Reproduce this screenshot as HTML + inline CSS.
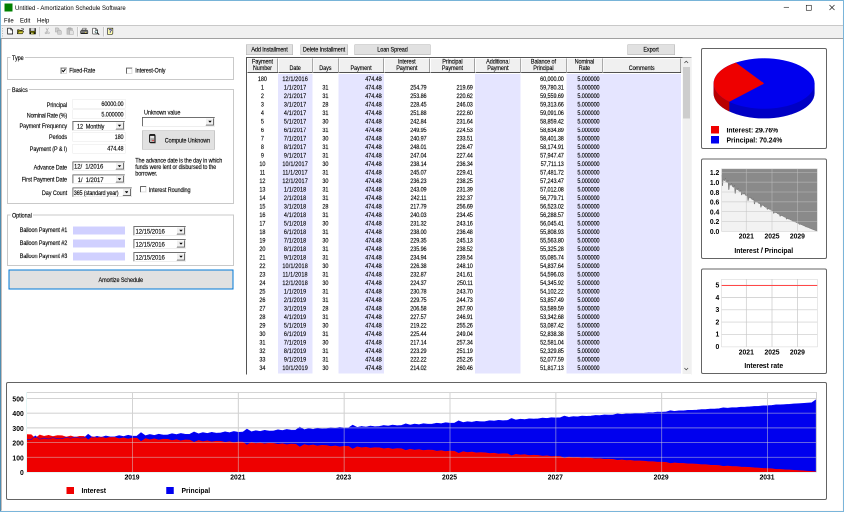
<!DOCTYPE html><html><head><meta charset="utf-8"><title>Untitled - Amortization Schedule Software</title><style>
html,body{margin:0;padding:0;background:#fff;overflow:hidden}
body{width:844px;height:512px;position:relative}
#w{position:absolute;left:0;top:0;width:1688px;height:1024px;transform:scale(.5);transform-origin:0 0;background:#fff;font-family:"Liberation Sans",sans-serif;font-size:11px;color:#000;letter-spacing:-.2px;overflow:hidden;will-change:transform}
#w div{position:absolute;box-sizing:border-box}
#w svg{position:absolute;overflow:visible}
.t{white-space:pre;line-height:14px;height:14px;margin-top:-7px;transform:scaleY(1.14);-webkit-text-stroke:.22px #000}
.r{text-align:right}.c{text-align:center}
.b{font-weight:bold;letter-spacing:0}
.gb{border:2px solid #c9c9c9}
.gl{background:#fff;padding:0 3px;white-space:pre;line-height:14px;height:14px;margin-top:-6px;transform:scaleY(1.14);-webkit-text-stroke:.22px #000}
.ed{border:1px solid #e6e6e6;background:#fff}
.cb{border:1.5px solid;border-color:#505050 #dcdcdc #dcdcdc #505050;background:#fff;box-shadow:inset 1px 1px 0 #909090}
.dd{background:#f0f0f0;border:1px solid;border-color:#fff #505050 #505050 #fff;box-shadow:inset -1px -1px 0 #909090}
.btn{background:#e1e1e1;border:1px solid #adadad}
.hd{background:#f0f0f0;border:solid;border-width:2px 1.7px 2px 2px;border-color:#fff #525252 #525252 #fff}
.pn{border:2px solid #646464;border-radius:4px;background:#fff}
.ck{border:1px solid;border-color:#808080 #e4e4e4 #e4e4e4 #808080;background:#fff;box-shadow:inset 1px 1px 0 #505050,inset -1px -1px 0 #d8d8d8}
</style></head><body><div id="w">
<div style="left:0px;top:0px;width:1688px;height:2px;background:#78b4d8"></div>
<div style="left:0px;top:0px;width:2px;height:78px;background:#78b4d8"></div>
<div style="left:0px;top:77px;width:2.4px;height:947px;background:#4f8db0"></div>
<div style="left:2.4px;top:77px;width:1.5px;height:945px;background:#c6bdbb"></div>
<div style="left:1686px;top:0px;width:2px;height:1024px;background:#7ab5da"></div>
<div style="left:1684.5px;top:31px;width:1.5px;height:990px;background:#fdf5f0"></div>
<div style="left:0px;top:1022px;width:1688px;height:2px;background:#7ab5da"></div>
<div style="left:2px;top:1020.5px;width:1684px;height:1.5px;background:#fdf5f0"></div>
<div style="left:9px;top:7px;width:16px;height:16px;background:#008000"></div>
<div class="t" style="left:30px;top:15.5px;font-size:12px;letter-spacing:0;transform:scaleY(1.04);-webkit-text-stroke:0">Untitled - Amortization Schedule Software</div>
<svg style="left:1560px;top:0" width="128" height="31" viewBox="0 0 128 31"><g stroke="#000" stroke-width="1.1" fill="none"><path d="M7.5 14.5h10.5"/><rect x="52.5" y="10.5" width="10" height="10"/><path d="M99 10l10 10M109 10l-10 10"/></g></svg>
<div class="t" style="left:8px;top:41px;font-size:12px;letter-spacing:0;transform:scaleY(1.04);-webkit-text-stroke:0">File</div>
<div class="t" style="left:40px;top:41px;font-size:12px;letter-spacing:0;transform:scaleY(1.04);-webkit-text-stroke:0">Edit</div>
<div class="t" style="left:74px;top:41px;font-size:12px;letter-spacing:0;transform:scaleY(1.04);-webkit-text-stroke:0">Help</div>
<div style="left:2px;top:50px;width:1684px;height:27.5px;background:#f0f0f0;border-top:1.5px solid #a0a0a0;border-bottom:2px solid #a0a0a0"></div>
<div style="left:4px;top:56px;width:2px;height:2px;background:#b8b8b8"></div>
<div style="left:4px;top:61px;width:2px;height:2px;background:#b8b8b8"></div>
<div style="left:4px;top:66px;width:2px;height:2px;background:#b8b8b8"></div>
<div style="left:4px;top:71px;width:2px;height:2px;background:#b8b8b8"></div>
<svg style="left:14px;top:55px" width="14.4" height="14.4" viewBox="0 0 16 16"><path d="M1.5 1.5h7l4 4v9h-11z" fill="#fff" stroke="#000" stroke-width="1.500"/><path d="M8.5 1.5v4h4" fill="none" stroke="#000" stroke-width="1.200"/></svg>
<svg style="left:34px;top:55px" width="15.3" height="14.4" viewBox="0 0 17 16"><path d="M1 5h4l1 1h6v8h-11z" fill="#808000" stroke="#000" stroke-width="1.100"/><path d="M1 14l3-6h11l-3 6z" fill="#d8d040" stroke="#000" stroke-width="1.100"/><path d="M9 3q3-2.5 5 0l.5 1.5m0-2.500v2.500h-2.500" fill="none" stroke="#000" stroke-width="1"/></svg>
<svg style="left:58px;top:55px" width="14.4" height="14.4" viewBox="0 0 16 16"><rect x="1" y="1.500" width="14" height="13.500" fill="#000"/><rect x="3.500" y="1.500" width="9" height="6" fill="#d8d8d8"/><rect x="2" y="8.500" width="12" height="2" fill="#808000"/><rect x="4.500" y="11" width="7" height="4" fill="#808000"/><rect x="5.500" y="11.500" width="2" height="3" fill="#fff"/></svg>
<div style="left:78px;top:54px;width:1px;height:19px;background:#a0a0a0"></div>
<div style="left:79px;top:54px;width:1px;height:19px;background:#fff"></div>
<svg style="left:89px;top:55px" width="10.8" height="14.4" viewBox="0 0 12 16"><g fill="none" stroke="#a8a8a8" stroke-width="1.300"><path d="M3 1l5 9M9 1l-5 9"/><circle cx="3.200" cy="12" r="2"/><circle cx="8.800" cy="12" r="2"/></g></svg>
<svg style="left:110px;top:55px" width="14.4" height="14.4" viewBox="0 0 16 16"><g fill="#d0d0d0" stroke="#a8a8a8" stroke-width="1.200"><path d="M1 1h6l2 2v7h-8z"/><path d="M6 6h6l2 2v7h-8z"/></g></svg>
<svg style="left:133px;top:55px" width="14.4" height="14.4" viewBox="0 0 16 16"><g stroke="#a8a8a8" stroke-width="1.200"><rect x="1" y="2" width="12" height="13" fill="#c4c4c4"/><rect x="4" y=".6" width="6" height="3" fill="#b0b0b0"/><path d="M7 6h6l2 2v7.500h-8z" fill="#e4e4e4"/></g></svg>
<div style="left:154.5px;top:54px;width:1px;height:19px;background:#a0a0a0"></div>
<div style="left:155.5px;top:54px;width:1px;height:19px;background:#fff"></div>
<svg style="left:160px;top:55px" width="16.2" height="14.4" viewBox="0 0 18 16"><path d="M4 6l2-4.500h8l-2 4.500z" fill="#fff" stroke="#000" stroke-width=".9"/><path d="M1 8l3-2.500h12l1.500 2.500v5h-16.500z" fill="#606060" stroke="#000" stroke-width=".9"/><path d="M1 10h16" stroke="#c0c0c0" stroke-width="1"/><rect x="11" y="10.500" width="3" height="2" fill="#e0d040"/><path d="M2 13.500h15" stroke="#000" stroke-width="1.500"/></svg>
<svg style="left:184px;top:55px" width="15.3" height="14.4" viewBox="0 0 17 16"><path d="M1.500 1.500h7l4 4v9h-11z" fill="#fff" stroke="#000" stroke-width="1.100"/><path d="M8.500 1.500v4h4" fill="none" stroke="#000"/><circle cx="9.500" cy="9.500" r="3" fill="#dff" stroke="#000" stroke-width="1.100"/><path d="M12 12l4 4" stroke="#000" stroke-width="1.800"/></svg>
<div style="left:206.5px;top:54px;width:1px;height:19px;background:#a0a0a0"></div>
<div style="left:207.5px;top:54px;width:1px;height:19px;background:#fff"></div>
<svg style="left:214px;top:55px" width="13.5" height="14.4" viewBox="0 0 15 16"><path d="M1.500 1.500h11.500v12l-2 2h-9.500z" fill="#ffffb0" stroke="#000" stroke-width="1.200"/><text x="7.200" y="12.500" font-size="13" font-weight="bold" text-anchor="middle" fill="#000090" font-family="Liberation Sans,sans-serif" letter-spacing="0">?</text></svg>
<div class="gb" style="left:14px;top:114px;width:454px;height:46px;"></div>
<div class="gl" style="left:21px;top:114px">Type</div>
<div class="gb" style="left:14px;top:178px;width:454px;height:230px;"></div>
<div class="gl" style="left:21px;top:178px">Basics</div>
<div class="gb" style="left:14px;top:429px;width:454px;height:102.5px;"></div>
<div class="gl" style="left:21px;top:429px">Optional</div>
<div class="ck" style="left:120.5px;top:135px;width:13px;height:13px;"></div>
<svg style="left:120.5px;top:135px" width="13" height="13" viewBox="0 0 13 13"><path d="M3.200 5.800l2.300 2.600l4.300-5" fill="none" stroke="#000" stroke-width="2.200"/></svg>
<div class="t" style="left:138.5px;top:140.3px;">Fixed-Rate</div>
<div class="ck" style="left:252px;top:135px;width:13px;height:13px;"></div>
<div class="t" style="left:270.5px;top:140.3px;">Interest-Only</div>
<div class="t r" style="left:-266px;width:400px;top:208.5px;">Principal</div>
<div class="ed" style="left:145px;top:197.8px;width:105.5px;height:19px;"></div>
<div class="t r" style="left:-153px;width:400px;top:206.5px;">60000.00</div>
<div class="t r" style="left:-266px;width:400px;top:229.8px;"><span style="letter-spacing:-.4px">Nominal Rate (%)</span></div>
<div class="ed" style="left:145px;top:219.1px;width:105.5px;height:19px;"></div>
<div class="t r" style="left:-153px;width:400px;top:227.8px;">5.000000</div>
<div class="t r" style="left:-266px;width:400px;top:251.2px;">Payment Frequency</div>
<div class="t r" style="left:-266px;width:400px;top:273.4px;">Periods</div>
<div class="ed" style="left:145px;top:263.9px;width:105.5px;height:19px;"></div>
<div class="t r" style="left:-153px;width:400px;top:272.6px;">180</div>
<div class="t r" style="left:-266px;width:400px;top:297.2px;">Payment (P &amp; I)</div>
<div class="ed" style="left:145px;top:287.7px;width:105.5px;height:19px;"></div>
<div class="t r" style="left:-153px;width:400px;top:296.4px;">474.48</div>
<div class="cb" style="left:145px;top:242px;width:104.5px;height:18.5px;"></div>
<div class="dd" style="left:230.5px;top:244px;width:17px;height:14.5px;"></div>
<svg style="left:235px;top:249.25px" width="8" height="5" viewBox="0 0 8 5"><path d="M.5 .5h7l-3.500 4z" fill="#000"/></svg>
<div class="t" style="left:154px;top:251.75px;">12  Monthly</div>
<div class="cb" style="left:145px;top:322.5px;width:104.5px;height:18px;"></div>
<div class="dd" style="left:230.5px;top:324.5px;width:17px;height:14px;"></div>
<svg style="left:235px;top:329.5px" width="8" height="5" viewBox="0 0 8 5"><path d="M.5 .5h7l-3.500 4z" fill="#000"/></svg>
<div class="t" style="left:148px;top:332px;font-size:12px;letter-spacing:-.15px">12/  1/2016</div>
<div class="t r" style="left:-266px;width:400px;top:333.6px;">Advance Date</div>
<div class="cb" style="left:145px;top:349px;width:104.5px;height:18px;"></div>
<div class="dd" style="left:230.5px;top:351px;width:17px;height:14px;"></div>
<svg style="left:235px;top:356px" width="8" height="5" viewBox="0 0 8 5"><path d="M.5 .5h7l-3.500 4z" fill="#000"/></svg>
<div class="t" style="left:152px;top:358.5px;font-size:12px;letter-spacing:-.15px"> 1/  1/2017</div>
<div class="t r" style="left:-266px;width:400px;top:358px;">First Payment Date</div>
<div class="cb" style="left:145px;top:374.5px;width:118.5px;height:19px;"></div>
<div class="dd" style="left:244.5px;top:376.5px;width:17px;height:15px;"></div>
<svg style="left:249px;top:382px" width="8" height="5" viewBox="0 0 8 5"><path d="M.5 .5h7l-3.500 4z" fill="#000"/></svg>
<div class="t" style="left:147.5px;top:384.5px;letter-spacing:-.35px">365 (standard year)</div>
<div class="t r" style="left:-266px;width:400px;top:384.6px;">Day Count</div>
<div class="t" style="left:288px;top:224px;">Unknown value</div>
<div class="cb" style="left:284px;top:234px;width:146px;height:18.5px;"></div>
<div class="dd" style="left:411px;top:236px;width:17px;height:14.5px;"></div>
<svg style="left:415.5px;top:241.25px" width="8" height="5" viewBox="0 0 8 5"><path d="M.5 .5h7l-3.500 4z" fill="#000"/></svg>
<div class="btn" style="left:284px;top:261px;width:146px;height:38px;"></div>
<svg style="left:297.5px;top:267.5px" width="14" height="19" viewBox="0 0 14 19"><rect x="1.2" y="1.2" width="10.600" height="15.600" rx="1" fill="#c8c8c8" stroke="#000" stroke-width="1.700"/><path d="M12.600 3v15h-10" fill="none" stroke="#222" stroke-width="1.200"/><rect x="2" y="1.500" width="9" height="2.200" fill="#111"/><rect x="3" y="4.600" width="7" height="2.600" fill="#f4f4f4"/><rect x="3" y="8.500" width="7" height="6.500" fill="#a8a8a8"/><rect x="6.800" y="11.800" width="2.600" height="2.600" fill="#f02020"/></svg>
<div class="t" style="left:329.5px;top:280px;">Compute Unknown</div>
<div class="t" style="left:270.5px;top:320.3px;">The advance date is the day in which</div>
<div class="t" style="left:270.5px;top:333.1px;">funds were lent or disbursed to the</div>
<div class="t" style="left:270.5px;top:345.8px;">borrower.</div>
<div class="ck" style="left:279.5px;top:372px;width:13px;height:13px;"></div>
<div class="t" style="left:297.5px;top:379px;">Interest Rounding</div>
<div class="t" style="left:39.5px;top:459.4px;">Balloon Payment #1</div>
<div style="left:145.5px;top:452.9px;width:104px;height:16px;background:#d0d0ff"></div>
<div class="cb" style="left:266.5px;top:451.9px;width:105.5px;height:19px;"></div>
<div class="dd" style="left:353px;top:453.9px;width:17px;height:15px;"></div>
<svg style="left:357.5px;top:459.4px" width="8" height="5" viewBox="0 0 8 5"><path d="M.5 .5h7l-3.500 4z" fill="#000"/></svg>
<div class="t" style="left:271px;top:461.9px;font-size:12px;letter-spacing:-.15px">12/15/2016</div>
<div class="t" style="left:39.5px;top:485.4px;">Balloon Payment #2</div>
<div style="left:145.5px;top:478.9px;width:104px;height:16px;background:#d0d0ff"></div>
<div class="cb" style="left:266.5px;top:477.9px;width:105.5px;height:19px;"></div>
<div class="dd" style="left:353px;top:479.9px;width:17px;height:15px;"></div>
<svg style="left:357.5px;top:485.4px" width="8" height="5" viewBox="0 0 8 5"><path d="M.5 .5h7l-3.500 4z" fill="#000"/></svg>
<div class="t" style="left:271px;top:487.9px;font-size:12px;letter-spacing:-.15px">12/15/2016</div>
<div class="t" style="left:39.5px;top:511.4px;">Balloon Payment #3</div>
<div style="left:145.5px;top:504.9px;width:104px;height:16px;background:#d0d0ff"></div>
<div class="cb" style="left:266.5px;top:503.9px;width:105.5px;height:19px;"></div>
<div class="dd" style="left:353px;top:505.9px;width:17px;height:15px;"></div>
<svg style="left:357.5px;top:511.4px" width="8" height="5" viewBox="0 0 8 5"><path d="M.5 .5h7l-3.500 4z" fill="#000"/></svg>
<div class="t" style="left:271px;top:513.9px;font-size:12px;letter-spacing:-.15px">12/15/2016</div>
<div style="left:16.5px;top:539px;width:450.5px;height:40px;background:#e1e1e1;border:2px solid #0078d7"></div>
<div class="t c" style="left:41.5px;width:400px;top:559.4px;">Amortize Schedule</div>
<div class="btn" style="left:492px;top:89px;width:94px;height:20.5px;"></div>
<div class="t c" style="left:339px;width:400px;top:98.4px;">Add Installment</div>
<div class="btn" style="left:600.5px;top:89px;width:95px;height:20.5px;"></div>
<div class="t c" style="left:448px;width:400px;top:98.4px;">Delete Installment</div>
<div class="btn" style="left:708.5px;top:89px;width:152.5px;height:20.5px;"></div>
<div class="t c" style="left:585px;width:400px;top:98.4px;">Loan Spread</div>
<div class="btn" style="left:1254.5px;top:89px;width:95.5px;height:20.5px;"></div>
<div class="t c" style="left:1102px;width:400px;top:98.4px;">Export</div>
<div style="left:492px;top:114px;width:890.5px;height:634.5px;background:#fff;border-left:2px solid #545454;border-top:2px solid #545454;border-right:1px solid #e8e8e8"></div>
<div style="left:555.5px;top:148.4px;width:69.5px;height:598.6px;background:#e5e5ff"></div>
<div style="left:676.5px;top:148.4px;width:91px;height:598.6px;background:#e5e5ff"></div>
<div style="left:950px;top:148.4px;width:91px;height:598.6px;background:#e5e5ff"></div>
<div style="left:1132.5px;top:148.4px;width:72.5px;height:598.6px;background:#e5e5ff"></div>
<div style="left:1205px;top:148.4px;width:156.5px;height:598.6px;background:#e5e5ff"></div>
<div class="hd" style="left:494px;top:116px;width:61.5px;height:30px;"></div>
<div class="t c" style="left:324.75px;width:400px;top:122px;">Payment</div>
<div class="t c" style="left:324.75px;width:400px;top:134.8px;">Number</div>
<div class="hd" style="left:555.5px;top:116px;width:69.5px;height:30px;"></div>
<div class="t c" style="left:390.25px;width:400px;top:134.8px;">Date</div>
<div class="hd" style="left:625px;top:116px;width:51.5px;height:30px;"></div>
<div class="t c" style="left:450.75px;width:400px;top:134.8px;">Days</div>
<div class="hd" style="left:676.5px;top:116px;width:91px;height:30px;"></div>
<div class="t c" style="left:522px;width:400px;top:134.8px;">Payment</div>
<div class="hd" style="left:767.5px;top:116px;width:92px;height:30px;"></div>
<div class="t c" style="left:613.5px;width:400px;top:122px;">Interest</div>
<div class="t c" style="left:613.5px;width:400px;top:134.8px;">Payment</div>
<div class="hd" style="left:859.5px;top:116px;width:90.5px;height:30px;"></div>
<div class="t c" style="left:704.75px;width:400px;top:122px;">Principal</div>
<div class="t c" style="left:704.75px;width:400px;top:134.8px;">Payment</div>
<div class="hd" style="left:950px;top:116px;width:91px;height:30px;"></div>
<div class="t c" style="left:795.5px;width:400px;top:122px;">Additional</div>
<div class="t c" style="left:795.5px;width:400px;top:134.8px;">Payment</div>
<div class="hd" style="left:1041px;top:116px;width:91.5px;height:30px;"></div>
<div class="t c" style="left:886.75px;width:400px;top:122px;">Balance of</div>
<div class="t c" style="left:886.75px;width:400px;top:134.8px;">Principal</div>
<div class="hd" style="left:1132.5px;top:116px;width:72.5px;height:30px;"></div>
<div class="t c" style="left:968.75px;width:400px;top:122px;">Nominal</div>
<div class="t c" style="left:968.75px;width:400px;top:134.8px;">Rate</div>
<div class="hd" style="left:1205px;top:116px;width:156.5px;height:30px;"></div>
<div class="t c" style="left:1083.25px;width:400px;top:134.8px;">Comments</div>
<div style="left:1361.5px;top:116px;width:3.5px;height:30px;background:#f0f0f0"></div>
<div class="t c" style="left:324.75px;width:400px;top:156.51px;">180</div>
<div class="t c" style="left:390.25px;width:400px;top:156.51px;letter-spacing:.25px">12/1/2016</div>
<div class="t r" style="left:363px;width:400px;top:156.51px;">474.48</div>
<div class="t r" style="left:727.5px;width:400px;top:156.51px;">60,000.00</div>
<div class="t r" style="left:799px;width:400px;top:156.51px;">5.000000</div>
<div class="t c" style="left:324.75px;width:400px;top:173.53px;">1</div>
<div class="t c" style="left:390.25px;width:400px;top:173.53px;letter-spacing:.25px">1/1/2017</div>
<div class="t c" style="left:450.75px;width:400px;top:173.53px;">31</div>
<div class="t r" style="left:363px;width:400px;top:173.53px;">474.48</div>
<div class="t r" style="left:453px;width:400px;top:173.53px;">254.79</div>
<div class="t r" style="left:545.5px;width:400px;top:173.53px;">219.69</div>
<div class="t r" style="left:727.5px;width:400px;top:173.53px;">59,780.31</div>
<div class="t r" style="left:799px;width:400px;top:173.53px;">5.000000</div>
<div class="t c" style="left:324.75px;width:400px;top:190.55px;">2</div>
<div class="t c" style="left:390.25px;width:400px;top:190.55px;letter-spacing:.25px">2/1/2017</div>
<div class="t c" style="left:450.75px;width:400px;top:190.55px;">31</div>
<div class="t r" style="left:363px;width:400px;top:190.55px;">474.48</div>
<div class="t r" style="left:453px;width:400px;top:190.55px;">253.86</div>
<div class="t r" style="left:545.5px;width:400px;top:190.55px;">220.62</div>
<div class="t r" style="left:727.5px;width:400px;top:190.55px;">59,559.69</div>
<div class="t r" style="left:799px;width:400px;top:190.55px;">5.000000</div>
<div class="t c" style="left:324.75px;width:400px;top:207.57px;">3</div>
<div class="t c" style="left:390.25px;width:400px;top:207.57px;letter-spacing:.25px">3/1/2017</div>
<div class="t c" style="left:450.75px;width:400px;top:207.57px;">28</div>
<div class="t r" style="left:363px;width:400px;top:207.57px;">474.48</div>
<div class="t r" style="left:453px;width:400px;top:207.57px;">228.45</div>
<div class="t r" style="left:545.5px;width:400px;top:207.57px;">246.03</div>
<div class="t r" style="left:727.5px;width:400px;top:207.57px;">59,313.66</div>
<div class="t r" style="left:799px;width:400px;top:207.57px;">5.000000</div>
<div class="t c" style="left:324.75px;width:400px;top:224.59px;">4</div>
<div class="t c" style="left:390.25px;width:400px;top:224.59px;letter-spacing:.25px">4/1/2017</div>
<div class="t c" style="left:450.75px;width:400px;top:224.59px;">31</div>
<div class="t r" style="left:363px;width:400px;top:224.59px;">474.48</div>
<div class="t r" style="left:453px;width:400px;top:224.59px;">251.88</div>
<div class="t r" style="left:545.5px;width:400px;top:224.59px;">222.60</div>
<div class="t r" style="left:727.5px;width:400px;top:224.59px;">59,091.06</div>
<div class="t r" style="left:799px;width:400px;top:224.59px;">5.000000</div>
<div class="t c" style="left:324.75px;width:400px;top:241.61px;">5</div>
<div class="t c" style="left:390.25px;width:400px;top:241.61px;letter-spacing:.25px">5/1/2017</div>
<div class="t c" style="left:450.75px;width:400px;top:241.61px;">30</div>
<div class="t r" style="left:363px;width:400px;top:241.61px;">474.48</div>
<div class="t r" style="left:453px;width:400px;top:241.61px;">242.84</div>
<div class="t r" style="left:545.5px;width:400px;top:241.61px;">231.64</div>
<div class="t r" style="left:727.5px;width:400px;top:241.61px;">58,859.42</div>
<div class="t r" style="left:799px;width:400px;top:241.61px;">5.000000</div>
<div class="t c" style="left:324.75px;width:400px;top:258.63px;">6</div>
<div class="t c" style="left:390.25px;width:400px;top:258.63px;letter-spacing:.25px">6/1/2017</div>
<div class="t c" style="left:450.75px;width:400px;top:258.63px;">31</div>
<div class="t r" style="left:363px;width:400px;top:258.63px;">474.48</div>
<div class="t r" style="left:453px;width:400px;top:258.63px;">249.95</div>
<div class="t r" style="left:545.5px;width:400px;top:258.63px;">224.53</div>
<div class="t r" style="left:727.5px;width:400px;top:258.63px;">58,634.89</div>
<div class="t r" style="left:799px;width:400px;top:258.63px;">5.000000</div>
<div class="t c" style="left:324.75px;width:400px;top:275.65px;">7</div>
<div class="t c" style="left:390.25px;width:400px;top:275.65px;letter-spacing:.25px">7/1/2017</div>
<div class="t c" style="left:450.75px;width:400px;top:275.65px;">30</div>
<div class="t r" style="left:363px;width:400px;top:275.65px;">474.48</div>
<div class="t r" style="left:453px;width:400px;top:275.65px;">240.97</div>
<div class="t r" style="left:545.5px;width:400px;top:275.65px;">233.51</div>
<div class="t r" style="left:727.5px;width:400px;top:275.65px;">58,401.38</div>
<div class="t r" style="left:799px;width:400px;top:275.65px;">5.000000</div>
<div class="t c" style="left:324.75px;width:400px;top:292.67px;">8</div>
<div class="t c" style="left:390.25px;width:400px;top:292.67px;letter-spacing:.25px">8/1/2017</div>
<div class="t c" style="left:450.75px;width:400px;top:292.67px;">31</div>
<div class="t r" style="left:363px;width:400px;top:292.67px;">474.48</div>
<div class="t r" style="left:453px;width:400px;top:292.67px;">248.01</div>
<div class="t r" style="left:545.5px;width:400px;top:292.67px;">226.47</div>
<div class="t r" style="left:727.5px;width:400px;top:292.67px;">58,174.91</div>
<div class="t r" style="left:799px;width:400px;top:292.67px;">5.000000</div>
<div class="t c" style="left:324.75px;width:400px;top:309.69px;">9</div>
<div class="t c" style="left:390.25px;width:400px;top:309.69px;letter-spacing:.25px">9/1/2017</div>
<div class="t c" style="left:450.75px;width:400px;top:309.69px;">31</div>
<div class="t r" style="left:363px;width:400px;top:309.69px;">474.48</div>
<div class="t r" style="left:453px;width:400px;top:309.69px;">247.04</div>
<div class="t r" style="left:545.5px;width:400px;top:309.69px;">227.44</div>
<div class="t r" style="left:727.5px;width:400px;top:309.69px;">57,947.47</div>
<div class="t r" style="left:799px;width:400px;top:309.69px;">5.000000</div>
<div class="t c" style="left:324.75px;width:400px;top:326.71px;">10</div>
<div class="t c" style="left:390.25px;width:400px;top:326.71px;letter-spacing:.25px">10/1/2017</div>
<div class="t c" style="left:450.75px;width:400px;top:326.71px;">30</div>
<div class="t r" style="left:363px;width:400px;top:326.71px;">474.48</div>
<div class="t r" style="left:453px;width:400px;top:326.71px;">238.14</div>
<div class="t r" style="left:545.5px;width:400px;top:326.71px;">236.34</div>
<div class="t r" style="left:727.5px;width:400px;top:326.71px;">57,711.13</div>
<div class="t r" style="left:799px;width:400px;top:326.71px;">5.000000</div>
<div class="t c" style="left:324.75px;width:400px;top:343.73px;">11</div>
<div class="t c" style="left:390.25px;width:400px;top:343.73px;letter-spacing:.25px">11/1/2017</div>
<div class="t c" style="left:450.75px;width:400px;top:343.73px;">31</div>
<div class="t r" style="left:363px;width:400px;top:343.73px;">474.48</div>
<div class="t r" style="left:453px;width:400px;top:343.73px;">245.07</div>
<div class="t r" style="left:545.5px;width:400px;top:343.73px;">229.41</div>
<div class="t r" style="left:727.5px;width:400px;top:343.73px;">57,481.72</div>
<div class="t r" style="left:799px;width:400px;top:343.73px;">5.000000</div>
<div class="t c" style="left:324.75px;width:400px;top:360.75px;">12</div>
<div class="t c" style="left:390.25px;width:400px;top:360.75px;letter-spacing:.25px">12/1/2017</div>
<div class="t c" style="left:450.75px;width:400px;top:360.75px;">30</div>
<div class="t r" style="left:363px;width:400px;top:360.75px;">474.48</div>
<div class="t r" style="left:453px;width:400px;top:360.75px;">236.23</div>
<div class="t r" style="left:545.5px;width:400px;top:360.75px;">238.25</div>
<div class="t r" style="left:727.5px;width:400px;top:360.75px;">57,243.47</div>
<div class="t r" style="left:799px;width:400px;top:360.75px;">5.000000</div>
<div class="t c" style="left:324.75px;width:400px;top:377.77px;">13</div>
<div class="t c" style="left:390.25px;width:400px;top:377.77px;letter-spacing:.25px">1/1/2018</div>
<div class="t c" style="left:450.75px;width:400px;top:377.77px;">31</div>
<div class="t r" style="left:363px;width:400px;top:377.77px;">474.48</div>
<div class="t r" style="left:453px;width:400px;top:377.77px;">243.09</div>
<div class="t r" style="left:545.5px;width:400px;top:377.77px;">231.39</div>
<div class="t r" style="left:727.5px;width:400px;top:377.77px;">57,012.08</div>
<div class="t r" style="left:799px;width:400px;top:377.77px;">5.000000</div>
<div class="t c" style="left:324.75px;width:400px;top:394.79px;">14</div>
<div class="t c" style="left:390.25px;width:400px;top:394.79px;letter-spacing:.25px">2/1/2018</div>
<div class="t c" style="left:450.75px;width:400px;top:394.79px;">31</div>
<div class="t r" style="left:363px;width:400px;top:394.79px;">474.48</div>
<div class="t r" style="left:453px;width:400px;top:394.79px;">242.11</div>
<div class="t r" style="left:545.5px;width:400px;top:394.79px;">232.37</div>
<div class="t r" style="left:727.5px;width:400px;top:394.79px;">56,779.71</div>
<div class="t r" style="left:799px;width:400px;top:394.79px;">5.000000</div>
<div class="t c" style="left:324.75px;width:400px;top:411.81px;">15</div>
<div class="t c" style="left:390.25px;width:400px;top:411.81px;letter-spacing:.25px">3/1/2018</div>
<div class="t c" style="left:450.75px;width:400px;top:411.81px;">28</div>
<div class="t r" style="left:363px;width:400px;top:411.81px;">474.48</div>
<div class="t r" style="left:453px;width:400px;top:411.81px;">217.79</div>
<div class="t r" style="left:545.5px;width:400px;top:411.81px;">256.69</div>
<div class="t r" style="left:727.5px;width:400px;top:411.81px;">56,523.02</div>
<div class="t r" style="left:799px;width:400px;top:411.81px;">5.000000</div>
<div class="t c" style="left:324.75px;width:400px;top:428.83px;">16</div>
<div class="t c" style="left:390.25px;width:400px;top:428.83px;letter-spacing:.25px">4/1/2018</div>
<div class="t c" style="left:450.75px;width:400px;top:428.83px;">31</div>
<div class="t r" style="left:363px;width:400px;top:428.83px;">474.48</div>
<div class="t r" style="left:453px;width:400px;top:428.83px;">240.03</div>
<div class="t r" style="left:545.5px;width:400px;top:428.83px;">234.45</div>
<div class="t r" style="left:727.5px;width:400px;top:428.83px;">56,288.57</div>
<div class="t r" style="left:799px;width:400px;top:428.83px;">5.000000</div>
<div class="t c" style="left:324.75px;width:400px;top:445.85px;">17</div>
<div class="t c" style="left:390.25px;width:400px;top:445.85px;letter-spacing:.25px">5/1/2018</div>
<div class="t c" style="left:450.75px;width:400px;top:445.85px;">30</div>
<div class="t r" style="left:363px;width:400px;top:445.85px;">474.48</div>
<div class="t r" style="left:453px;width:400px;top:445.85px;">231.32</div>
<div class="t r" style="left:545.5px;width:400px;top:445.85px;">243.16</div>
<div class="t r" style="left:727.5px;width:400px;top:445.85px;">56,045.41</div>
<div class="t r" style="left:799px;width:400px;top:445.85px;">5.000000</div>
<div class="t c" style="left:324.75px;width:400px;top:462.87px;">18</div>
<div class="t c" style="left:390.25px;width:400px;top:462.87px;letter-spacing:.25px">6/1/2018</div>
<div class="t c" style="left:450.75px;width:400px;top:462.87px;">31</div>
<div class="t r" style="left:363px;width:400px;top:462.87px;">474.48</div>
<div class="t r" style="left:453px;width:400px;top:462.87px;">238.00</div>
<div class="t r" style="left:545.5px;width:400px;top:462.87px;">236.48</div>
<div class="t r" style="left:727.5px;width:400px;top:462.87px;">55,808.93</div>
<div class="t r" style="left:799px;width:400px;top:462.87px;">5.000000</div>
<div class="t c" style="left:324.75px;width:400px;top:479.89px;">19</div>
<div class="t c" style="left:390.25px;width:400px;top:479.89px;letter-spacing:.25px">7/1/2018</div>
<div class="t c" style="left:450.75px;width:400px;top:479.89px;">30</div>
<div class="t r" style="left:363px;width:400px;top:479.89px;">474.48</div>
<div class="t r" style="left:453px;width:400px;top:479.89px;">229.35</div>
<div class="t r" style="left:545.5px;width:400px;top:479.89px;">245.13</div>
<div class="t r" style="left:727.5px;width:400px;top:479.89px;">55,563.80</div>
<div class="t r" style="left:799px;width:400px;top:479.89px;">5.000000</div>
<div class="t c" style="left:324.75px;width:400px;top:496.91px;">20</div>
<div class="t c" style="left:390.25px;width:400px;top:496.91px;letter-spacing:.25px">8/1/2018</div>
<div class="t c" style="left:450.75px;width:400px;top:496.91px;">31</div>
<div class="t r" style="left:363px;width:400px;top:496.91px;">474.48</div>
<div class="t r" style="left:453px;width:400px;top:496.91px;">235.96</div>
<div class="t r" style="left:545.5px;width:400px;top:496.91px;">238.52</div>
<div class="t r" style="left:727.5px;width:400px;top:496.91px;">55,325.28</div>
<div class="t r" style="left:799px;width:400px;top:496.91px;">5.000000</div>
<div class="t c" style="left:324.75px;width:400px;top:513.93px;">21</div>
<div class="t c" style="left:390.25px;width:400px;top:513.93px;letter-spacing:.25px">9/1/2018</div>
<div class="t c" style="left:450.75px;width:400px;top:513.93px;">31</div>
<div class="t r" style="left:363px;width:400px;top:513.93px;">474.48</div>
<div class="t r" style="left:453px;width:400px;top:513.93px;">234.94</div>
<div class="t r" style="left:545.5px;width:400px;top:513.93px;">239.54</div>
<div class="t r" style="left:727.5px;width:400px;top:513.93px;">55,085.74</div>
<div class="t r" style="left:799px;width:400px;top:513.93px;">5.000000</div>
<div class="t c" style="left:324.75px;width:400px;top:530.95px;">22</div>
<div class="t c" style="left:390.25px;width:400px;top:530.95px;letter-spacing:.25px">10/1/2018</div>
<div class="t c" style="left:450.75px;width:400px;top:530.95px;">30</div>
<div class="t r" style="left:363px;width:400px;top:530.95px;">474.48</div>
<div class="t r" style="left:453px;width:400px;top:530.95px;">226.38</div>
<div class="t r" style="left:545.5px;width:400px;top:530.95px;">248.10</div>
<div class="t r" style="left:727.5px;width:400px;top:530.95px;">54,837.64</div>
<div class="t r" style="left:799px;width:400px;top:530.95px;">5.000000</div>
<div class="t c" style="left:324.75px;width:400px;top:547.97px;">23</div>
<div class="t c" style="left:390.25px;width:400px;top:547.97px;letter-spacing:.25px">11/1/2018</div>
<div class="t c" style="left:450.75px;width:400px;top:547.97px;">31</div>
<div class="t r" style="left:363px;width:400px;top:547.97px;">474.48</div>
<div class="t r" style="left:453px;width:400px;top:547.97px;">232.87</div>
<div class="t r" style="left:545.5px;width:400px;top:547.97px;">241.61</div>
<div class="t r" style="left:727.5px;width:400px;top:547.97px;">54,596.03</div>
<div class="t r" style="left:799px;width:400px;top:547.97px;">5.000000</div>
<div class="t c" style="left:324.75px;width:400px;top:564.99px;">24</div>
<div class="t c" style="left:390.25px;width:400px;top:564.99px;letter-spacing:.25px">12/1/2018</div>
<div class="t c" style="left:450.75px;width:400px;top:564.99px;">30</div>
<div class="t r" style="left:363px;width:400px;top:564.99px;">474.48</div>
<div class="t r" style="left:453px;width:400px;top:564.99px;">224.37</div>
<div class="t r" style="left:545.5px;width:400px;top:564.99px;">250.11</div>
<div class="t r" style="left:727.5px;width:400px;top:564.99px;">54,345.92</div>
<div class="t r" style="left:799px;width:400px;top:564.99px;">5.000000</div>
<div class="t c" style="left:324.75px;width:400px;top:582.01px;">25</div>
<div class="t c" style="left:390.25px;width:400px;top:582.01px;letter-spacing:.25px">1/1/2019</div>
<div class="t c" style="left:450.75px;width:400px;top:582.01px;">31</div>
<div class="t r" style="left:363px;width:400px;top:582.01px;">474.48</div>
<div class="t r" style="left:453px;width:400px;top:582.01px;">230.78</div>
<div class="t r" style="left:545.5px;width:400px;top:582.01px;">243.70</div>
<div class="t r" style="left:727.5px;width:400px;top:582.01px;">54,102.22</div>
<div class="t r" style="left:799px;width:400px;top:582.01px;">5.000000</div>
<div class="t c" style="left:324.75px;width:400px;top:599.03px;">26</div>
<div class="t c" style="left:390.25px;width:400px;top:599.03px;letter-spacing:.25px">2/1/2019</div>
<div class="t c" style="left:450.75px;width:400px;top:599.03px;">31</div>
<div class="t r" style="left:363px;width:400px;top:599.03px;">474.48</div>
<div class="t r" style="left:453px;width:400px;top:599.03px;">229.75</div>
<div class="t r" style="left:545.5px;width:400px;top:599.03px;">244.73</div>
<div class="t r" style="left:727.5px;width:400px;top:599.03px;">53,857.49</div>
<div class="t r" style="left:799px;width:400px;top:599.03px;">5.000000</div>
<div class="t c" style="left:324.75px;width:400px;top:616.05px;">27</div>
<div class="t c" style="left:390.25px;width:400px;top:616.05px;letter-spacing:.25px">3/1/2019</div>
<div class="t c" style="left:450.75px;width:400px;top:616.05px;">28</div>
<div class="t r" style="left:363px;width:400px;top:616.05px;">474.48</div>
<div class="t r" style="left:453px;width:400px;top:616.05px;">206.58</div>
<div class="t r" style="left:545.5px;width:400px;top:616.05px;">267.90</div>
<div class="t r" style="left:727.5px;width:400px;top:616.05px;">53,589.59</div>
<div class="t r" style="left:799px;width:400px;top:616.05px;">5.000000</div>
<div class="t c" style="left:324.75px;width:400px;top:633.07px;">28</div>
<div class="t c" style="left:390.25px;width:400px;top:633.07px;letter-spacing:.25px">4/1/2019</div>
<div class="t c" style="left:450.75px;width:400px;top:633.07px;">31</div>
<div class="t r" style="left:363px;width:400px;top:633.07px;">474.48</div>
<div class="t r" style="left:453px;width:400px;top:633.07px;">227.57</div>
<div class="t r" style="left:545.5px;width:400px;top:633.07px;">246.91</div>
<div class="t r" style="left:727.5px;width:400px;top:633.07px;">53,342.68</div>
<div class="t r" style="left:799px;width:400px;top:633.07px;">5.000000</div>
<div class="t c" style="left:324.75px;width:400px;top:650.09px;">29</div>
<div class="t c" style="left:390.25px;width:400px;top:650.09px;letter-spacing:.25px">5/1/2019</div>
<div class="t c" style="left:450.75px;width:400px;top:650.09px;">30</div>
<div class="t r" style="left:363px;width:400px;top:650.09px;">474.48</div>
<div class="t r" style="left:453px;width:400px;top:650.09px;">219.22</div>
<div class="t r" style="left:545.5px;width:400px;top:650.09px;">255.26</div>
<div class="t r" style="left:727.5px;width:400px;top:650.09px;">53,087.42</div>
<div class="t r" style="left:799px;width:400px;top:650.09px;">5.000000</div>
<div class="t c" style="left:324.75px;width:400px;top:667.11px;">30</div>
<div class="t c" style="left:390.25px;width:400px;top:667.11px;letter-spacing:.25px">6/1/2019</div>
<div class="t c" style="left:450.75px;width:400px;top:667.11px;">31</div>
<div class="t r" style="left:363px;width:400px;top:667.11px;">474.48</div>
<div class="t r" style="left:453px;width:400px;top:667.11px;">225.44</div>
<div class="t r" style="left:545.5px;width:400px;top:667.11px;">249.04</div>
<div class="t r" style="left:727.5px;width:400px;top:667.11px;">52,838.38</div>
<div class="t r" style="left:799px;width:400px;top:667.11px;">5.000000</div>
<div class="t c" style="left:324.75px;width:400px;top:684.13px;">31</div>
<div class="t c" style="left:390.25px;width:400px;top:684.13px;letter-spacing:.25px">7/1/2019</div>
<div class="t c" style="left:450.75px;width:400px;top:684.13px;">30</div>
<div class="t r" style="left:363px;width:400px;top:684.13px;">474.48</div>
<div class="t r" style="left:453px;width:400px;top:684.13px;">217.14</div>
<div class="t r" style="left:545.5px;width:400px;top:684.13px;">257.34</div>
<div class="t r" style="left:727.5px;width:400px;top:684.13px;">52,581.04</div>
<div class="t r" style="left:799px;width:400px;top:684.13px;">5.000000</div>
<div class="t c" style="left:324.75px;width:400px;top:701.15px;">32</div>
<div class="t c" style="left:390.25px;width:400px;top:701.15px;letter-spacing:.25px">8/1/2019</div>
<div class="t c" style="left:450.75px;width:400px;top:701.15px;">31</div>
<div class="t r" style="left:363px;width:400px;top:701.15px;">474.48</div>
<div class="t r" style="left:453px;width:400px;top:701.15px;">223.29</div>
<div class="t r" style="left:545.5px;width:400px;top:701.15px;">251.19</div>
<div class="t r" style="left:727.5px;width:400px;top:701.15px;">52,329.85</div>
<div class="t r" style="left:799px;width:400px;top:701.15px;">5.000000</div>
<div class="t c" style="left:324.75px;width:400px;top:718.17px;">33</div>
<div class="t c" style="left:390.25px;width:400px;top:718.17px;letter-spacing:.25px">9/1/2019</div>
<div class="t c" style="left:450.75px;width:400px;top:718.17px;">31</div>
<div class="t r" style="left:363px;width:400px;top:718.17px;">474.48</div>
<div class="t r" style="left:453px;width:400px;top:718.17px;">222.22</div>
<div class="t r" style="left:545.5px;width:400px;top:718.17px;">252.26</div>
<div class="t r" style="left:727.5px;width:400px;top:718.17px;">52,077.59</div>
<div class="t r" style="left:799px;width:400px;top:718.17px;">5.000000</div>
<div class="t c" style="left:324.75px;width:400px;top:735.19px;">34</div>
<div class="t c" style="left:390.25px;width:400px;top:735.19px;letter-spacing:.25px">10/1/2019</div>
<div class="t c" style="left:450.75px;width:400px;top:735.19px;">30</div>
<div class="t r" style="left:363px;width:400px;top:735.19px;">474.48</div>
<div class="t r" style="left:453px;width:400px;top:735.19px;">214.02</div>
<div class="t r" style="left:545.5px;width:400px;top:735.19px;">260.46</div>
<div class="t r" style="left:727.5px;width:400px;top:735.19px;">51,817.13</div>
<div class="t r" style="left:799px;width:400px;top:735.19px;">5.000000</div>
<div style="left:1365px;top:115px;width:16.5px;height:632.5px;background:#f0f0f0"></div>
<div style="left:1366px;top:134px;width:14px;height:103px;background:#cdcdcd"></div>
<svg style="left:1368px;top:121px" width="9" height="6" viewBox="0 0 9 6"><path d="M.8 5l3.700-3.700l3.700 3.700" fill="none" stroke="#404040" stroke-width="1.400"/></svg>
<svg style="left:1368px;top:735px" width="9" height="6" viewBox="0 0 9 6"><path d="M.8 1l3.700 3.700l3.700-3.700" fill="none" stroke="#404040" stroke-width="1.400"/></svg>
<div class="pn" style="left:1402px;top:96px;width:252px;height:202px;"></div>
<div class="pn" style="left:1402px;top:317px;width:252px;height:200.5px;"></div>
<div class="pn" style="left:1402px;top:537px;width:252px;height:211px;"></div>
<svg style="left:0;top:0" width="1688" height="1024" viewBox="0 0 1688 1024"><path d="M1427.2 167v19.5A101 50.4 0 0 0 1629.2 186.5v-19.5z" fill="#0000c4"/><path d="M1427.20 167.00v19.5A101 50.4 0 0 0 1458.68 223.06v-19.5z" fill="#b80000"/><ellipse cx="1528.2" cy="167" rx="101" ry="50.4" fill="#0000ee"/><path d="M1528.2 167L1471.72 125.22A101 50.4 0 0 0 1458.68 203.56z" fill="#ee0000"/><rect x="1422" y="252" width="16" height="15" fill="#f00000"/><rect x="1422" y="272" width="16" height="15" fill="#0000f0"/><text transform="translate(1453 265) scale(1 1.12)" font-family="Liberation Sans,sans-serif" font-weight="bold" font-size="13.6" letter-spacing="0">Interest: 29.76%</text><text transform="translate(1453 285) scale(1 1.12)" font-family="Liberation Sans,sans-serif" font-weight="bold" font-size="13.6" letter-spacing="0">Principal: 70.24%</text>
<rect x="1443.2" y="337.6" width="191.39999999999986" height="125.19999999999999" fill="#8a8a8a"/><path d="M1443.2 462.8L1443.20 349.63L1444.29 371.40L1445.27 371.40L1446.36 359.66L1447.42 359.66L1448.51 361.27L1449.56 361.27L1450.65 355.95L1451.74 363.65L1452.79 363.65L1453.88 365.23L1454.94 365.23L1456.03 360.29L1457.11 379.25L1458.10 379.25L1459.19 369.17L1460.24 369.17L1461.33 370.71L1462.39 370.71L1463.47 366.28L1464.56 372.98L1465.62 372.98L1466.71 374.49L1467.76 374.49L1468.85 370.40L1469.94 386.83L1470.92 386.83L1472.01 378.24L1473.07 378.24L1474.16 379.71L1475.21 379.71L1476.30 376.07L1477.39 381.87L1478.44 381.87L1479.53 383.31L1480.59 383.31L1481.68 379.98L1482.77 389.91L1483.79 389.91L1484.87 386.87L1485.93 386.87L1487.02 388.27L1488.07 388.27L1489.16 385.33L1490.25 390.34L1491.30 390.34L1492.39 391.71L1493.45 391.71L1494.54 389.03L1495.63 401.18L1496.61 401.18L1497.70 395.12L1498.75 395.12L1499.84 396.46L1500.90 396.46L1501.99 394.12L1503.08 398.43L1504.13 398.43L1505.22 399.74L1506.27 399.74L1507.36 397.64L1508.45 407.97L1509.44 407.97L1510.53 402.99L1511.58 402.99L1512.67 404.26L1513.72 404.26L1514.81 402.47L1515.90 406.14L1516.96 406.14L1518.05 407.39L1519.10 407.39L1520.19 405.81L1521.28 414.52L1522.26 414.52L1523.35 410.49L1524.41 410.49L1525.49 411.70L1526.55 411.70L1527.64 410.38L1528.73 413.50L1529.78 413.50L1530.87 414.69L1531.92 414.69L1533.01 413.55L1534.10 418.67L1535.12 418.67L1536.21 417.63L1537.27 417.63L1538.36 418.79L1539.41 418.79L1540.50 417.87L1541.59 420.50L1542.64 420.50L1543.73 421.63L1544.79 421.63L1545.88 420.88L1546.96 426.87L1547.95 426.87L1549.04 424.45L1550.09 424.45L1551.18 425.55L1552.24 425.55L1553.32 425.00L1554.41 427.18L1555.47 427.18L1556.56 428.27L1557.61 428.27L1558.70 427.85L1559.79 432.69L1560.77 432.69L1561.86 430.94L1562.92 430.94L1564.01 431.99L1565.06 431.99L1566.15 431.75L1567.24 433.55L1568.29 433.55L1569.38 434.58L1570.44 434.58L1571.53 434.46L1572.62 438.30L1573.60 438.30L1574.69 437.13L1575.74 437.13L1576.83 438.14L1577.89 438.14L1578.98 438.16L1580.06 439.62L1581.12 439.62L1582.21 440.61L1583.26 440.61L1584.35 440.73L1585.44 442.88L1586.46 442.88L1587.55 443.03L1588.60 443.03L1589.69 443.99L1590.75 443.99L1591.84 444.25L1592.93 445.41L1593.98 445.41L1595.07 446.34L1596.12 446.34L1597.21 446.69L1598.30 448.84L1599.29 448.84L1600.37 448.65L1601.43 448.65L1602.52 449.56L1603.57 449.56L1604.66 450.02L1605.75 450.92L1606.81 450.95L1607.89 451.81L1608.95 451.88L1610.04 452.34L1611.13 453.81L1612.11 453.81L1613.20 454.01L1614.25 454.16L1615.34 454.88L1616.40 455.06L1617.49 455.50L1618.58 456.17L1619.63 456.39L1620.72 457.02L1621.77 457.27L1622.86 457.70L1623.95 458.57L1624.94 458.57L1626.03 459.12L1627.08 459.43L1628.17 459.94L1629.22 460.28L1630.31 460.71L1631.40 461.17L1632.46 461.55L1633.55 462.00L1634.60 462.00L1634.6 462.8z" fill="#f2f2f2"/><path d="M1443.20 349.63L1444.29 371.40L1445.27 371.40L1446.36 359.66L1447.42 359.66L1448.51 361.27L1449.56 361.27L1450.65 355.95L1451.74 363.65L1452.79 363.65L1453.88 365.23L1454.94 365.23L1456.03 360.29L1457.11 379.25L1458.10 379.25L1459.19 369.17L1460.24 369.17L1461.33 370.71L1462.39 370.71L1463.47 366.28L1464.56 372.98L1465.62 372.98L1466.71 374.49L1467.76 374.49L1468.85 370.40L1469.94 386.83L1470.92 386.83L1472.01 378.24L1473.07 378.24L1474.16 379.71L1475.21 379.71L1476.30 376.07L1477.39 381.87L1478.44 381.87L1479.53 383.31L1480.59 383.31L1481.68 379.98L1482.77 389.91L1483.79 389.91L1484.87 386.87L1485.93 386.87L1487.02 388.27L1488.07 388.27L1489.16 385.33L1490.25 390.34L1491.30 390.34L1492.39 391.71L1493.45 391.71L1494.54 389.03L1495.63 401.18L1496.61 401.18L1497.70 395.12L1498.75 395.12L1499.84 396.46L1500.90 396.46L1501.99 394.12L1503.08 398.43L1504.13 398.43L1505.22 399.74L1506.27 399.74L1507.36 397.64L1508.45 407.97L1509.44 407.97L1510.53 402.99L1511.58 402.99L1512.67 404.26L1513.72 404.26L1514.81 402.47L1515.90 406.14L1516.96 406.14L1518.05 407.39L1519.10 407.39L1520.19 405.81L1521.28 414.52L1522.26 414.52L1523.35 410.49L1524.41 410.49L1525.49 411.70L1526.55 411.70L1527.64 410.38L1528.73 413.50L1529.78 413.50L1530.87 414.69L1531.92 414.69L1533.01 413.55L1534.10 418.67L1535.12 418.67L1536.21 417.63L1537.27 417.63L1538.36 418.79L1539.41 418.79L1540.50 417.87L1541.59 420.50L1542.64 420.50L1543.73 421.63L1544.79 421.63L1545.88 420.88L1546.96 426.87L1547.95 426.87L1549.04 424.45L1550.09 424.45L1551.18 425.55L1552.24 425.55L1553.32 425.00L1554.41 427.18L1555.47 427.18L1556.56 428.27L1557.61 428.27L1558.70 427.85L1559.79 432.69L1560.77 432.69L1561.86 430.94L1562.92 430.94L1564.01 431.99L1565.06 431.99L1566.15 431.75L1567.24 433.55L1568.29 433.55L1569.38 434.58L1570.44 434.58L1571.53 434.46L1572.62 438.30L1573.60 438.30L1574.69 437.13L1575.74 437.13L1576.83 438.14L1577.89 438.14L1578.98 438.16L1580.06 439.62L1581.12 439.62L1582.21 440.61L1583.26 440.61L1584.35 440.73L1585.44 442.88L1586.46 442.88L1587.55 443.03L1588.60 443.03L1589.69 443.99L1590.75 443.99L1591.84 444.25L1592.93 445.41L1593.98 445.41L1595.07 446.34L1596.12 446.34L1597.21 446.69L1598.30 448.84L1599.29 448.84L1600.37 448.65L1601.43 448.65L1602.52 449.56L1603.57 449.56L1604.66 450.02L1605.75 450.92L1606.81 450.95L1607.89 451.81L1608.95 451.88L1610.04 452.34L1611.13 453.81L1612.11 453.81L1613.20 454.01L1614.25 454.16L1615.34 454.88L1616.40 455.06L1617.49 455.50L1618.58 456.17L1619.63 456.39L1620.72 457.02L1621.77 457.27L1622.86 457.70L1623.95 458.57L1624.94 458.57L1626.03 459.12L1627.08 459.43L1628.17 459.94L1629.22 460.28L1630.31 460.71L1631.40 461.17L1632.46 461.55L1633.55 462.00L1634.60 462.00" fill="none" stroke="#666" stroke-width=".8"/><path d="M1443.2 442.80H1634.6" stroke="#c0c0c0" stroke-opacity=".6" stroke-width="1.6"/><path d="M1443.2 423.20H1634.6" stroke="#c0c0c0" stroke-opacity=".6" stroke-width="1.6"/><path d="M1443.2 403.60H1634.6" stroke="#c0c0c0" stroke-opacity=".6" stroke-width="1.6"/><path d="M1443.2 384.00H1634.6" stroke="#c0c0c0" stroke-opacity=".6" stroke-width="1.6"/><path d="M1443.2 364.40H1634.6" stroke="#c0c0c0" stroke-opacity=".6" stroke-width="1.6"/><path d="M1443.2 344.80H1634.6" stroke="#c0c0c0" stroke-opacity=".6" stroke-width="1.6"/><path d="M1492.60 337.6V462.8" stroke="#c0c0c0" stroke-opacity=".6" stroke-width="1.6"/><text transform="translate(1492.60 477.3) scale(1 1.12)" text-anchor="middle" font-family="Liberation Sans,sans-serif" font-weight="bold" font-size="13.6" letter-spacing="0">2021</text><path d="M1544.00 337.6V462.8" stroke="#c0c0c0" stroke-opacity=".6" stroke-width="1.6"/><text transform="translate(1544.00 477.3) scale(1 1.12)" text-anchor="middle" font-family="Liberation Sans,sans-serif" font-weight="bold" font-size="13.6" letter-spacing="0">2025</text><path d="M1594.80 337.6V462.8" stroke="#c0c0c0" stroke-opacity=".6" stroke-width="1.6"/><text transform="translate(1594.80 477.3) scale(1 1.12)" text-anchor="middle" font-family="Liberation Sans,sans-serif" font-weight="bold" font-size="13.6" letter-spacing="0">2029</text><rect x="1443.2" y="337.6" width="191.39999999999986" height="125.19999999999999" fill="none" stroke="#d0d0d0" stroke-width="1"/><text transform="translate(1438.5 468.00) scale(1 1.12)" text-anchor="end" font-family="Liberation Sans,sans-serif" font-weight="bold" font-size="13.6" letter-spacing="0">0.0</text><text transform="translate(1438.5 448.40) scale(1 1.12)" text-anchor="end" font-family="Liberation Sans,sans-serif" font-weight="bold" font-size="13.6" letter-spacing="0">0.2</text><text transform="translate(1438.5 428.80) scale(1 1.12)" text-anchor="end" font-family="Liberation Sans,sans-serif" font-weight="bold" font-size="13.6" letter-spacing="0">0.4</text><text transform="translate(1438.5 409.20) scale(1 1.12)" text-anchor="end" font-family="Liberation Sans,sans-serif" font-weight="bold" font-size="13.6" letter-spacing="0">0.6</text><text transform="translate(1438.5 389.60) scale(1 1.12)" text-anchor="end" font-family="Liberation Sans,sans-serif" font-weight="bold" font-size="13.6" letter-spacing="0">0.8</text><text transform="translate(1438.5 370.00) scale(1 1.12)" text-anchor="end" font-family="Liberation Sans,sans-serif" font-weight="bold" font-size="13.6" letter-spacing="0">1.0</text><text transform="translate(1438.5 350.40) scale(1 1.12)" text-anchor="end" font-family="Liberation Sans,sans-serif" font-weight="bold" font-size="13.6" letter-spacing="0">1.2</text><text transform="translate(1527.5 506) scale(1 1.12)" text-anchor="middle" font-family="Liberation Sans,sans-serif" font-weight="bold" font-size="13.6" letter-spacing="0">Interest / Principal</text>
<rect x="1443.2" y="558.6" width="191.39999999999986" height="135.19999999999993" fill="#fff" stroke="#d0d0d0" stroke-width="1"/><text transform="translate(1438.5 697.80) scale(1 1.12)" text-anchor="end" font-family="Liberation Sans,sans-serif" font-weight="bold" font-size="13.6" letter-spacing="0">0</text><path d="M1443.2 668.66H1634.6" stroke="#c8c8c8" stroke-width="1.4"/><text transform="translate(1438.5 673.26) scale(1 1.12)" text-anchor="end" font-family="Liberation Sans,sans-serif" font-weight="bold" font-size="13.6" letter-spacing="0">1</text><path d="M1443.2 644.12H1634.6" stroke="#c8c8c8" stroke-width="1.4"/><text transform="translate(1438.5 648.72) scale(1 1.12)" text-anchor="end" font-family="Liberation Sans,sans-serif" font-weight="bold" font-size="13.6" letter-spacing="0">2</text><path d="M1443.2 619.58H1634.6" stroke="#c8c8c8" stroke-width="1.4"/><text transform="translate(1438.5 624.18) scale(1 1.12)" text-anchor="end" font-family="Liberation Sans,sans-serif" font-weight="bold" font-size="13.6" letter-spacing="0">3</text><path d="M1443.2 595.04H1634.6" stroke="#c8c8c8" stroke-width="1.4"/><text transform="translate(1438.5 599.64) scale(1 1.12)" text-anchor="end" font-family="Liberation Sans,sans-serif" font-weight="bold" font-size="13.6" letter-spacing="0">4</text><path d="M1443.2 570.50H1634.6" stroke="#c8c8c8" stroke-width="1.4"/><text transform="translate(1438.5 575.10) scale(1 1.12)" text-anchor="end" font-family="Liberation Sans,sans-serif" font-weight="bold" font-size="13.6" letter-spacing="0">5</text><path d="M1492.60 558.6V693.8" stroke="#c8c8c8" stroke-width="1.4"/><text transform="translate(1492.60 709.3) scale(1 1.12)" text-anchor="middle" font-family="Liberation Sans,sans-serif" font-weight="bold" font-size="13.6" letter-spacing="0">2021</text><path d="M1544.00 558.6V693.8" stroke="#c8c8c8" stroke-width="1.4"/><text transform="translate(1544.00 709.3) scale(1 1.12)" text-anchor="middle" font-family="Liberation Sans,sans-serif" font-weight="bold" font-size="13.6" letter-spacing="0">2025</text><path d="M1594.80 558.6V693.8" stroke="#c8c8c8" stroke-width="1.4"/><text transform="translate(1594.80 709.3) scale(1 1.12)" text-anchor="middle" font-family="Liberation Sans,sans-serif" font-weight="bold" font-size="13.6" letter-spacing="0">2029</text><path d="M1443.2 571H1634.6" stroke="#ff4848" stroke-width="2"/><text transform="translate(1527.5 735.5) scale(1 1.12)" text-anchor="middle" font-family="Liberation Sans,sans-serif" font-weight="bold" font-size="13.6" letter-spacing="0">Interest rate</text>
</svg>
<div class="pn" style="left:12px;top:764px;width:1642px;height:236px;"></div>
<svg style="left:0;top:0" width="1688" height="1024" viewBox="0 0 1688 1024"><rect x="53" y="785" width="1580" height="159" fill="#fff"/><path d="M53 914.58H1633" stroke="#cdcdcd" stroke-width="1.8"/><path d="M53 885.16H1633" stroke="#cdcdcd" stroke-width="1.8"/><path d="M53 855.74H1633" stroke="#cdcdcd" stroke-width="1.8"/><path d="M53 826.32H1633" stroke="#cdcdcd" stroke-width="1.8"/><path d="M53 796.90H1633" stroke="#cdcdcd" stroke-width="1.8"/><path d="M265.00 785V944" stroke="#cdcdcd" stroke-width="1.8"/><path d="M476.67 785V944" stroke="#cdcdcd" stroke-width="1.8"/><path d="M688.33 785V944" stroke="#cdcdcd" stroke-width="1.8"/><path d="M900.00 785V944" stroke="#cdcdcd" stroke-width="1.8"/><path d="M1111.66 785V944" stroke="#cdcdcd" stroke-width="1.8"/><path d="M1323.33 785V944" stroke="#cdcdcd" stroke-width="1.8"/><path d="M1535.00 785V944" stroke="#cdcdcd" stroke-width="1.8"/><path d="M53.40 879.37L62.38 879.09L70.50 871.62L79.48 878.51L88.17 875.85L97.16 877.94L105.85 875.30L114.83 877.37L123.82 877.09L132.51 874.47L141.49 876.51L150.18 873.91L159.17 875.93L168.15 875.64L176.26 868.48L185.25 875.02L193.94 872.46L202.92 874.43L211.62 871.88L220.60 873.83L229.58 873.53L238.28 871.01L247.26 872.92L255.95 870.42L264.94 872.30L273.92 872.00L282.03 865.18L291.01 871.36L299.71 868.90L308.69 870.73L317.38 868.29L326.37 870.10L335.35 869.79L344.04 867.37L353.03 869.15L361.72 866.75L370.70 868.50L379.69 868.18L388.09 863.76L397.07 867.52L405.77 865.17L414.75 866.86L423.44 864.52L432.42 866.19L441.41 865.86L450.10 863.56L459.08 865.19L467.78 862.90L476.76 864.51L485.74 864.17L493.86 858.08L502.84 863.47L511.53 861.23L520.52 862.77L529.21 860.56L538.19 862.07L547.18 861.73L555.87 859.54L564.85 861.02L573.54 858.85L582.53 860.30L591.51 859.95L599.62 854.25L608.61 859.21L617.30 857.09L626.28 858.48L634.98 856.39L643.96 857.75L652.94 857.38L661.64 855.32L670.62 856.64L679.31 854.59L688.30 855.88L697.28 855.51L705.39 850.23L714.37 854.74L723.07 852.75L732.05 853.97L740.74 852.00L749.73 853.20L758.71 852.81L767.40 850.88L776.39 852.03L785.08 850.11L794.06 851.24L803.05 850.84L811.45 847.48L820.43 850.04L829.13 848.18L838.11 849.24L846.80 847.40L855.78 848.42L864.77 848.02L873.46 846.21L882.44 847.19L891.14 845.42L900.12 846.36L909.10 845.95L917.22 841.55L926.20 845.10L934.89 843.38L943.88 844.25L952.57 842.55L961.55 843.40L970.54 842.97L979.23 841.31L988.21 842.10L996.90 840.47L1005.89 841.23L1014.87 840.79L1022.98 836.88L1031.97 839.90L1040.66 838.33L1049.64 839.01L1058.34 837.46L1067.32 838.11L1076.30 837.66L1085.00 836.15L1093.98 836.75L1102.67 835.27L1111.66 835.84L1120.64 835.38L1128.75 831.96L1137.74 834.44L1146.43 833.02L1155.41 833.50L1164.10 832.11L1173.09 832.56L1182.07 832.09L1190.76 830.73L1199.75 831.13L1208.44 829.80L1217.42 830.17L1226.41 829.68L1234.81 827.60L1243.79 828.70L1252.49 827.44L1261.47 827.72L1270.16 826.49L1279.14 826.72L1288.13 826.23L1296.82 825.04L1305.80 825.22L1314.50 824.06L1323.48 824.21L1332.46 823.70L1340.58 821.37L1349.56 822.67L1358.25 821.58L1367.24 821.63L1375.93 820.57L1384.91 820.59L1393.90 820.07L1402.59 819.05L1411.57 819.01L1420.26 818.02L1429.25 817.94L1438.23 817.41L1446.34 815.66L1455.33 816.32L1464.02 815.41L1473.00 815.23L1481.70 814.36L1490.68 814.14L1499.66 813.59L1508.36 812.75L1517.34 812.47L1526.03 811.67L1535.02 811.35L1544.00 810.79L1552.11 809.66L1561.10 809.66L1569.79 808.93L1578.77 808.51L1587.46 807.82L1596.45 807.36L1605.43 806.78L1614.12 806.14L1623.11 805.61L1631.80 799.54L1631.80 944.01L1623.11 943.40L1614.12 942.87L1605.43 942.23L1596.45 941.65L1587.46 941.19L1578.77 940.50L1569.79 940.08L1561.10 939.35L1552.11 939.35L1544.00 938.22L1535.02 937.65L1526.03 937.33L1517.34 936.53L1508.36 936.25L1499.66 935.42L1490.68 934.87L1481.70 934.65L1473.00 933.77L1464.02 933.59L1455.33 932.68L1446.34 933.35L1438.23 931.60L1429.25 931.07L1420.26 930.98L1411.57 930.00L1402.59 929.96L1393.90 928.94L1384.91 928.42L1375.93 928.43L1367.24 927.38L1358.25 927.43L1349.56 926.34L1340.58 927.64L1332.46 925.31L1323.48 924.80L1314.50 924.95L1305.80 923.79L1296.82 923.97L1288.13 922.78L1279.14 922.28L1270.16 922.52L1261.47 921.29L1252.49 921.56L1243.79 920.30L1234.81 921.41L1226.41 919.33L1217.42 918.84L1208.44 919.20L1199.75 917.88L1190.76 918.27L1182.07 916.92L1173.09 916.45L1164.10 916.90L1155.41 915.50L1146.43 915.99L1137.74 914.57L1128.75 917.05L1120.64 913.63L1111.66 913.17L1102.67 913.74L1093.98 912.26L1085.00 912.86L1076.30 911.35L1067.32 910.90L1058.34 911.54L1049.64 910.00L1040.66 910.68L1031.97 909.11L1022.98 912.13L1014.87 908.21L1005.89 907.78L996.90 908.54L988.21 906.90L979.23 907.70L970.54 906.04L961.55 905.61L952.57 906.45L943.88 904.76L934.89 905.63L926.20 903.91L917.22 907.45L909.10 903.06L900.12 902.64L891.14 903.59L882.44 901.81L873.46 902.79L864.77 900.99L855.78 900.58L846.80 901.61L838.11 899.77L829.13 900.83L820.43 898.97L811.45 901.53L803.05 898.16L794.06 897.77L785.08 898.89L776.39 896.98L767.40 898.13L758.71 896.20L749.73 895.81L740.74 897.01L732.05 895.04L723.07 896.26L714.37 894.27L705.39 898.78L697.28 893.50L688.30 893.12L679.31 894.42L670.62 892.37L661.64 893.69L652.94 891.63L643.96 891.26L634.98 892.62L626.28 890.53L617.30 891.91L608.61 889.80L599.62 894.76L591.51 889.06L582.53 888.70L573.54 890.16L564.85 887.99L555.87 889.47L547.18 887.28L538.19 886.93L529.21 888.45L520.52 886.23L511.53 887.78L502.84 885.54L493.86 890.93L485.74 884.84L476.76 884.50L467.78 886.10L459.08 883.82L450.10 885.45L441.41 883.15L432.42 882.82L423.44 884.48L414.75 882.15L405.77 883.84L397.07 881.49L388.09 885.25L379.69 880.83L370.70 880.51L361.72 882.26L353.03 879.86L344.04 881.64L335.35 879.22L326.37 878.91L317.38 880.72L308.69 878.28L299.71 880.11L291.01 877.65L282.03 883.82L273.92 877.01L264.94 876.70L255.95 878.59L247.26 876.09L238.28 878.00L229.58 875.48L220.60 875.18L211.62 877.13L202.92 875.03L193.94 876.55L185.25 875.62L176.26 880.53L168.15 876.24L159.17 876.53L150.18 875.10L141.49 877.11L132.51 875.07L123.82 877.69L114.83 877.97L105.85 875.90L97.16 878.54L88.17 876.45L79.48 879.11L70.50 877.39L62.38 879.69L53.40 879.97z" fill="#0000ee"/><path d="M53.40 944L53.40 869.04L62.38 869.31L70.50 876.79L79.48 869.90L88.17 872.56L97.16 870.46L105.85 873.11L114.83 871.04L123.82 871.32L132.51 873.94L141.49 871.90L150.18 874.50L159.17 872.48L168.15 872.77L176.26 879.93L185.25 873.38L193.94 875.95L202.92 873.98L211.62 876.53L220.60 874.58L229.58 874.88L238.28 877.40L247.26 875.49L255.95 877.99L264.94 876.10L273.92 876.41L282.03 883.22L291.01 877.05L299.71 879.51L308.69 877.68L317.38 880.12L326.37 878.31L335.35 878.62L344.04 881.04L353.03 879.26L361.72 881.66L370.70 879.91L379.69 880.23L388.09 884.65L397.07 880.89L405.77 883.24L414.75 881.55L423.44 883.88L432.42 882.22L441.41 882.55L450.10 884.85L459.08 883.22L467.78 885.50L476.76 883.90L485.74 884.24L493.86 890.33L502.84 884.94L511.53 887.18L520.52 885.63L529.21 887.85L538.19 886.33L547.18 886.68L555.87 888.87L564.85 887.39L573.54 889.56L582.53 888.10L591.51 888.46L599.62 894.16L608.61 889.20L617.30 891.31L626.28 889.93L634.98 892.02L643.96 890.66L652.94 891.03L661.64 893.09L670.62 891.77L679.31 893.82L688.30 892.52L697.28 892.90L705.39 898.18L714.37 893.67L723.07 895.66L732.05 894.44L740.74 896.41L749.73 895.21L758.71 895.60L767.40 897.53L776.39 896.38L785.08 898.29L794.06 897.17L803.05 897.56L811.45 900.93L820.43 898.37L829.13 900.23L838.11 899.17L846.80 901.01L855.78 899.98L864.77 900.39L873.46 902.19L882.44 901.21L891.14 902.99L900.12 902.04L909.10 902.46L917.22 906.85L926.20 903.31L934.89 905.03L943.88 904.16L952.57 905.85L961.55 905.01L970.54 905.44L979.23 907.10L988.21 906.30L996.90 907.94L1005.89 907.18L1014.87 907.61L1022.98 911.53L1031.97 908.51L1040.66 910.08L1049.64 909.40L1058.34 910.94L1067.32 910.30L1076.30 910.75L1085.00 912.26L1093.98 911.66L1102.67 913.14L1111.66 912.57L1120.64 913.03L1128.75 916.45L1137.74 913.97L1146.43 915.39L1155.41 914.90L1164.10 916.30L1173.09 915.85L1182.07 916.32L1190.76 917.67L1199.75 917.28L1208.44 918.60L1217.42 918.24L1226.41 918.73L1234.81 920.81L1243.79 919.70L1252.49 920.96L1261.47 920.69L1270.16 921.92L1279.14 921.68L1288.13 922.18L1296.82 923.37L1305.80 923.19L1314.50 924.35L1323.48 924.20L1332.46 924.71L1340.58 927.04L1349.56 925.74L1358.25 926.83L1367.24 926.78L1375.93 927.83L1384.91 927.82L1393.90 928.34L1402.59 929.36L1411.57 929.40L1420.26 930.38L1429.25 930.47L1438.23 931.00L1446.34 932.75L1455.33 932.08L1464.02 932.99L1473.00 933.17L1481.70 934.05L1490.68 934.27L1499.66 934.82L1508.36 935.65L1517.34 935.93L1526.03 936.73L1535.02 937.05L1544.00 937.62L1552.11 938.75L1561.10 938.75L1569.79 939.48L1578.77 939.90L1587.46 940.59L1596.45 941.05L1605.43 941.63L1614.12 942.27L1623.11 942.80L1631.80 943.41L1631.80 944z" fill="#ee0000"/><path d="M53.40 869.04L62.38 869.31L70.50 876.79L79.48 869.90L88.17 872.56L97.16 870.46L105.85 873.11L114.83 871.04L123.82 871.32L132.51 873.94L141.49 871.90L150.18 874.50L159.17 872.48L168.15 872.77L176.26 879.93L185.25 873.38L193.94 875.95L202.92 873.98L211.62 876.53L220.60 874.58L229.58 874.88L238.28 877.40L247.26 875.49L255.95 877.99L264.94 876.10L273.92 876.41L282.03 883.22L291.01 877.05L299.71 879.51L308.69 877.68L317.38 880.12L326.37 878.31L335.35 878.62L344.04 881.04L353.03 879.26L361.72 881.66L370.70 879.91L379.69 880.23L388.09 884.65L397.07 880.89L405.77 883.24L414.75 881.55L423.44 883.88L432.42 882.22L441.41 882.55L450.10 884.85L459.08 883.22L467.78 885.50L476.76 883.90L485.74 884.24L493.86 890.33L502.84 884.94L511.53 887.18L520.52 885.63L529.21 887.85L538.19 886.33L547.18 886.68L555.87 888.87L564.85 887.39L573.54 889.56L582.53 888.10L591.51 888.46L599.62 894.16L608.61 889.20L617.30 891.31L626.28 889.93L634.98 892.02L643.96 890.66L652.94 891.03L661.64 893.09L670.62 891.77L679.31 893.82L688.30 892.52L697.28 892.90L705.39 898.18L714.37 893.67L723.07 895.66L732.05 894.44L740.74 896.41L749.73 895.21L758.71 895.60L767.40 897.53L776.39 896.38L785.08 898.29L794.06 897.17L803.05 897.56L811.45 900.93L820.43 898.37L829.13 900.23L838.11 899.17L846.80 901.01L855.78 899.98L864.77 900.39L873.46 902.19L882.44 901.21L891.14 902.99L900.12 902.04L909.10 902.46L917.22 906.85L926.20 903.31L934.89 905.03L943.88 904.16L952.57 905.85L961.55 905.01L970.54 905.44L979.23 907.10L988.21 906.30L996.90 907.94L1005.89 907.18L1014.87 907.61L1022.98 911.53L1031.97 908.51L1040.66 910.08L1049.64 909.40L1058.34 910.94L1067.32 910.30L1076.30 910.75L1085.00 912.26L1093.98 911.66L1102.67 913.14L1111.66 912.57L1120.64 913.03L1128.75 916.45L1137.74 913.97L1146.43 915.39L1155.41 914.90L1164.10 916.30L1173.09 915.85L1182.07 916.32L1190.76 917.67L1199.75 917.28L1208.44 918.60L1217.42 918.24L1226.41 918.73L1234.81 920.81L1243.79 919.70L1252.49 920.96L1261.47 920.69L1270.16 921.92L1279.14 921.68L1288.13 922.18L1296.82 923.37L1305.80 923.19L1314.50 924.35L1323.48 924.20L1332.46 924.71L1340.58 927.04L1349.56 925.74L1358.25 926.83L1367.24 926.78L1375.93 927.83L1384.91 927.82L1393.90 928.34L1402.59 929.36L1411.57 929.40L1420.26 930.38L1429.25 930.47L1438.23 931.00L1446.34 932.75L1455.33 932.08L1464.02 932.99L1473.00 933.17L1481.70 934.05L1490.68 934.27L1499.66 934.82L1508.36 935.65L1517.34 935.93L1526.03 936.73L1535.02 937.05L1544.00 937.62L1552.11 938.75L1561.10 938.75L1569.79 939.48L1578.77 939.90L1587.46 940.59L1596.45 941.05L1605.43 941.63L1614.12 942.27L1623.11 942.80L1631.80 943.41" fill="none" stroke="#ff0000" stroke-width="1.1"/><path d="M53.40 879.37L62.38 879.09L70.50 871.62L79.48 878.51L88.17 875.85L97.16 877.94L105.85 875.30L114.83 877.37L123.82 877.09L132.51 874.47L141.49 876.51L150.18 873.91L159.17 875.93L168.15 875.64L176.26 868.48L185.25 875.02L193.94 872.46L202.92 874.43L211.62 871.88L220.60 873.83L229.58 873.53L238.28 871.01L247.26 872.92L255.95 870.42L264.94 872.30L273.92 872.00L282.03 865.18L291.01 871.36L299.71 868.90L308.69 870.73L317.38 868.29L326.37 870.10L335.35 869.79L344.04 867.37L353.03 869.15L361.72 866.75L370.70 868.50L379.69 868.18L388.09 863.76L397.07 867.52L405.77 865.17L414.75 866.86L423.44 864.52L432.42 866.19L441.41 865.86L450.10 863.56L459.08 865.19L467.78 862.90L476.76 864.51L485.74 864.17L493.86 858.08L502.84 863.47L511.53 861.23L520.52 862.77L529.21 860.56L538.19 862.07L547.18 861.73L555.87 859.54L564.85 861.02L573.54 858.85L582.53 860.30L591.51 859.95L599.62 854.25L608.61 859.21L617.30 857.09L626.28 858.48L634.98 856.39L643.96 857.75L652.94 857.38L661.64 855.32L670.62 856.64L679.31 854.59L688.30 855.88L697.28 855.51L705.39 850.23L714.37 854.74L723.07 852.75L732.05 853.97L740.74 852.00L749.73 853.20L758.71 852.81L767.40 850.88L776.39 852.03L785.08 850.11L794.06 851.24L803.05 850.84L811.45 847.48L820.43 850.04L829.13 848.18L838.11 849.24L846.80 847.40L855.78 848.42L864.77 848.02L873.46 846.21L882.44 847.19L891.14 845.42L900.12 846.36L909.10 845.95L917.22 841.55L926.20 845.10L934.89 843.38L943.88 844.25L952.57 842.55L961.55 843.40L970.54 842.97L979.23 841.31L988.21 842.10L996.90 840.47L1005.89 841.23L1014.87 840.79L1022.98 836.88L1031.97 839.90L1040.66 838.33L1049.64 839.01L1058.34 837.46L1067.32 838.11L1076.30 837.66L1085.00 836.15L1093.98 836.75L1102.67 835.27L1111.66 835.84L1120.64 835.38L1128.75 831.96L1137.74 834.44L1146.43 833.02L1155.41 833.50L1164.10 832.11L1173.09 832.56L1182.07 832.09L1190.76 830.73L1199.75 831.13L1208.44 829.80L1217.42 830.17L1226.41 829.68L1234.81 827.60L1243.79 828.70L1252.49 827.44L1261.47 827.72L1270.16 826.49L1279.14 826.72L1288.13 826.23L1296.82 825.04L1305.80 825.22L1314.50 824.06L1323.48 824.21L1332.46 823.70L1340.58 821.37L1349.56 822.67L1358.25 821.58L1367.24 821.63L1375.93 820.57L1384.91 820.59L1393.90 820.07L1402.59 819.05L1411.57 819.01L1420.26 818.02L1429.25 817.94L1438.23 817.41L1446.34 815.66L1455.33 816.32L1464.02 815.41L1473.00 815.23L1481.70 814.36L1490.68 814.14L1499.66 813.59L1508.36 812.75L1517.34 812.47L1526.03 811.67L1535.02 811.35L1544.00 810.79L1552.11 809.66L1561.10 809.66L1569.79 808.93L1578.77 808.51L1587.46 807.82L1596.45 807.36L1605.43 806.78L1614.12 806.14L1623.11 805.61L1631.80 799.54" fill="none" stroke="#0000ff" stroke-width="1.1"/><path d="M53 914.58H1633" stroke="#d4d4d4" stroke-opacity=".55" stroke-width="1.8"/><path d="M53 885.16H1633" stroke="#d4d4d4" stroke-opacity=".55" stroke-width="1.8"/><path d="M53 855.74H1633" stroke="#d4d4d4" stroke-opacity=".55" stroke-width="1.8"/><path d="M53 826.32H1633" stroke="#d4d4d4" stroke-opacity=".55" stroke-width="1.8"/><path d="M53 796.90H1633" stroke="#d4d4d4" stroke-opacity=".55" stroke-width="1.8"/><path d="M265.00 785V944" stroke="#d4d4d4" stroke-opacity=".55" stroke-width="1.8"/><text transform="translate(264.00 959) scale(1 1.12)" text-anchor="middle" font-family="Liberation Sans,sans-serif" font-weight="bold" font-size="13.6" letter-spacing="0">2019</text><path d="M476.67 785V944" stroke="#d4d4d4" stroke-opacity=".55" stroke-width="1.8"/><text transform="translate(475.67 959) scale(1 1.12)" text-anchor="middle" font-family="Liberation Sans,sans-serif" font-weight="bold" font-size="13.6" letter-spacing="0">2021</text><path d="M688.33 785V944" stroke="#d4d4d4" stroke-opacity=".55" stroke-width="1.8"/><text transform="translate(687.33 959) scale(1 1.12)" text-anchor="middle" font-family="Liberation Sans,sans-serif" font-weight="bold" font-size="13.6" letter-spacing="0">2023</text><path d="M900.00 785V944" stroke="#d4d4d4" stroke-opacity=".55" stroke-width="1.8"/><text transform="translate(899.00 959) scale(1 1.12)" text-anchor="middle" font-family="Liberation Sans,sans-serif" font-weight="bold" font-size="13.6" letter-spacing="0">2025</text><path d="M1111.66 785V944" stroke="#d4d4d4" stroke-opacity=".55" stroke-width="1.8"/><text transform="translate(1110.66 959) scale(1 1.12)" text-anchor="middle" font-family="Liberation Sans,sans-serif" font-weight="bold" font-size="13.6" letter-spacing="0">2027</text><path d="M1323.33 785V944" stroke="#d4d4d4" stroke-opacity=".55" stroke-width="1.8"/><text transform="translate(1322.33 959) scale(1 1.12)" text-anchor="middle" font-family="Liberation Sans,sans-serif" font-weight="bold" font-size="13.6" letter-spacing="0">2029</text><path d="M1535.00 785V944" stroke="#d4d4d4" stroke-opacity=".55" stroke-width="1.8"/><text transform="translate(1534.00 959) scale(1 1.12)" text-anchor="middle" font-family="Liberation Sans,sans-serif" font-weight="bold" font-size="13.6" letter-spacing="0">2031</text><path d="M52 785H1634" stroke="#d4d4d4" stroke-width="2"/><path d="M1633 784V945" stroke="#d0d0d0" stroke-width="2"/><path d="M53 784V946M52 945H1634" stroke="#e4f6f6" stroke-width="2" fill="none"/><text transform="translate(47.5 950.00) scale(1 1.12)" text-anchor="end" font-family="Liberation Sans,sans-serif" font-weight="bold" font-size="13.6" letter-spacing="0">0</text><text transform="translate(47.5 920.58) scale(1 1.12)" text-anchor="end" font-family="Liberation Sans,sans-serif" font-weight="bold" font-size="13.6" letter-spacing="0">100</text><text transform="translate(47.5 891.16) scale(1 1.12)" text-anchor="end" font-family="Liberation Sans,sans-serif" font-weight="bold" font-size="13.6" letter-spacing="0">200</text><text transform="translate(47.5 861.74) scale(1 1.12)" text-anchor="end" font-family="Liberation Sans,sans-serif" font-weight="bold" font-size="13.6" letter-spacing="0">300</text><text transform="translate(47.5 832.32) scale(1 1.12)" text-anchor="end" font-family="Liberation Sans,sans-serif" font-weight="bold" font-size="13.6" letter-spacing="0">400</text><text transform="translate(47.5 802.90) scale(1 1.12)" text-anchor="end" font-family="Liberation Sans,sans-serif" font-weight="bold" font-size="13.6" letter-spacing="0">500</text><rect x="133" y="974" width="15" height="14" fill="#f00000"/><rect x="332.5" y="974" width="15" height="14" fill="#0000f0"/><text transform="translate(163 986) scale(1 1.12)" font-family="Liberation Sans,sans-serif" font-weight="bold" font-size="13.6" letter-spacing="0">Interest</text><text transform="translate(363 986) scale(1 1.12)" font-family="Liberation Sans,sans-serif" font-weight="bold" font-size="13.6" letter-spacing="0">Principal</text></svg>
</div></body></html>
